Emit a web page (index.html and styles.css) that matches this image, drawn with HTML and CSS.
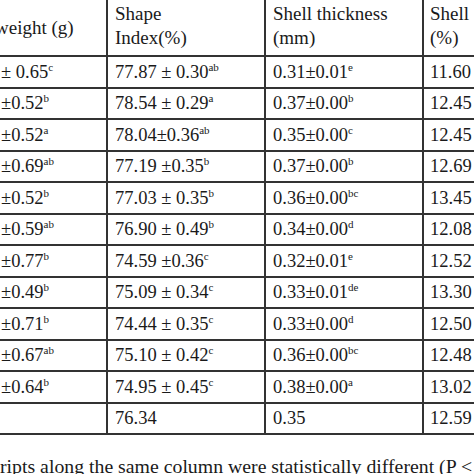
FILE: index.html
```html
<!DOCTYPE html>
<html>
<head>
<meta charset="utf-8">
<link rel="stylesheet" href="styles.css">
</head>
<body>
<div class="page">
<table class="data">
<thead>
<tr>
<th class="c1"><span class="cut">weight (g)</span></th>
<th class="c2">Shape<br>Index(%)</th>
<th class="c3">Shell thickness<br>(mm)</th>
<th class="c4">Shell<br>(%)</th>
</tr>
</thead>
<tbody>
<tr><td class="c1">± 0.65<sup>c</sup></td><td class="c2">77.87 ± 0.30<sup>ab</sup></td><td class="c3">0.31±0.01<sup>e</sup></td><td class="c4">11.60</td></tr>
<tr><td class="c1">±0.52<sup>b</sup></td><td class="c2">78.54 ± 0.29<sup>a</sup></td><td class="c3">0.37±0.00<sup>b</sup></td><td class="c4">12.45</td></tr>
<tr><td class="c1">±0.52<sup>a</sup></td><td class="c2">78.04±0.36<sup>ab</sup></td><td class="c3">0.35±0.00<sup>c</sup></td><td class="c4">12.45</td></tr>
<tr><td class="c1">±0.69<sup>ab</sup></td><td class="c2">77.19 ±0.35<sup>b</sup></td><td class="c3">0.37±0.00<sup>b</sup></td><td class="c4">12.69</td></tr>
<tr><td class="c1">±0.52<sup>b</sup></td><td class="c2">77.03 ± 0.35<sup>b</sup></td><td class="c3">0.36±0.00<sup>bc</sup></td><td class="c4">13.45</td></tr>
<tr><td class="c1">±0.59<sup>ab</sup></td><td class="c2">76.90 ± 0.49<sup>b</sup></td><td class="c3">0.34±0.00<sup>d</sup></td><td class="c4">12.08</td></tr>
<tr><td class="c1">±0.77<sup>b</sup></td><td class="c2">74.59 ±0.36<sup>c</sup></td><td class="c3">0.32±0.01<sup>e</sup></td><td class="c4">12.52</td></tr>
<tr><td class="c1">±0.49<sup>b</sup></td><td class="c2">75.09 ± 0.34<sup>c</sup></td><td class="c3">0.33±0.01<sup>de</sup></td><td class="c4">13.30</td></tr>
<tr><td class="c1">±0.71<sup>b</sup></td><td class="c2">74.44 ± 0.35<sup>c</sup></td><td class="c3">0.33±0.00<sup>d</sup></td><td class="c4">12.50</td></tr>
<tr><td class="c1">±0.67<sup>ab</sup></td><td class="c2">75.10 ± 0.42<sup>c</sup></td><td class="c3">0.36±0.00<sup>bc</sup></td><td class="c4">12.48</td></tr>
<tr><td class="c1">±0.64<sup>b</sup></td><td class="c2">74.95 ± 0.45<sup>c</sup></td><td class="c3">0.38±0.00<sup>a</sup></td><td class="c4">13.02</td></tr>
<tr><td class="c1"></td><td class="c2">76.34</td><td class="c3">0.35</td><td class="c4">12.59</td></tr>
</tbody>
</table>
<p class="note">ripts along the same column were statistically different (P &lt; 0.05).</p>
</div>
</body>
</html>
```
FILE: styles.css
```css
html, body {
  margin: 0;
  padding: 0;
  background: #ffffff;
  overflow: hidden;
}
.page {
  width: 474px;
  height: 474px;
  overflow: hidden;
  font-family: "Liberation Serif", "Times New Roman", serif;
  font-size: 18.5px;
  color: #1a1a1a;
}
.data {
  border-collapse: collapse;
  table-layout: fixed;
  width: 580px;
}
.data th, .data td {
  font-weight: normal;
  text-align: left;
  white-space: nowrap;
  padding: 0 0 0 7px;
  border-bottom: 2px solid #333;
  border-right: 2px solid #333;
  overflow: hidden;
}
.data th {
  height: 53px;
  vertical-align: top;
  font-size: 19px;
  line-height: 24px;
  padding-top: 2px;
}
.data td {
  height: 29.5px;
  vertical-align: middle;
  line-height: 20px;
}
.data .c1 { width: 105px; padding-left: 1px; }
.data th.c1 { vertical-align: middle; padding-top: 0; }
.data .c2 { width: 149px; }
.data .c3 { width: 149px; }
.data .c4 { width: 160px; border-right: none; padding-left: 6px; }
.cut {
  display: inline-block;
  margin-left: -6px;
}
sup {
  font-size: 11px;
  line-height: 0;
  vertical-align: 7px;
}
.note {
  margin: 20px 0 0 0;
  white-space: nowrap;
  font-size: 19.8px;
  line-height: 22px;
}
```
